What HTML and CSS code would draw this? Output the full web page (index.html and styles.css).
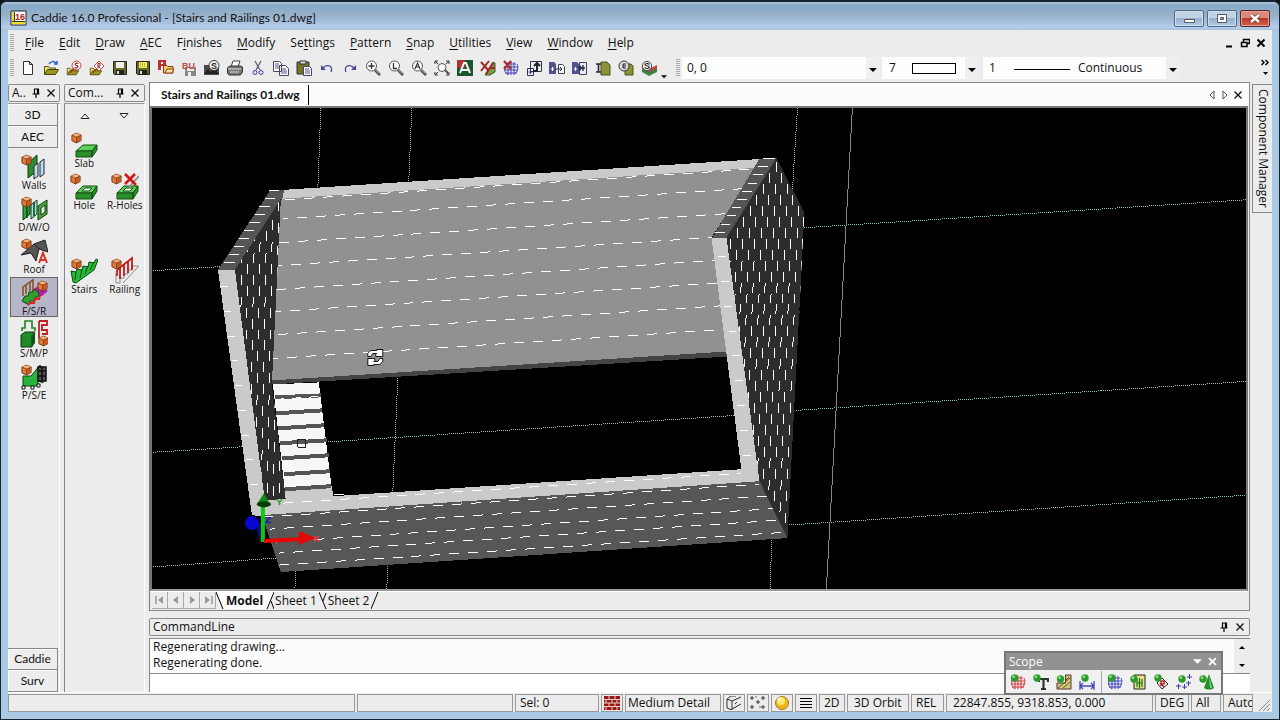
FILE: index.html
```html
<!DOCTYPE html>
<html lang="en">
<head>
<meta charset="utf-8">
<title>Caddie 16.0 Professional</title>
<link rel="stylesheet" href="styles.css">
</head>
<body>
<svg class="defs" aria-hidden="true">
  <symbol id="cube" viewBox="0 0 12 12"><path d="M1 3 6 .6l5 2.2v6L6 11.4 1 9z" fill="#e47a36" stroke="#713311"/><path d="M1 3l5 2 5-2.2L6 .8z" fill="#f7b27c"/><path d="M6 5v6l4.500-2.200V3.200z" fill="#c65d22"/><path d="M1 3l5 2 5-2M6 5v6" fill="none" stroke="#713311" stroke-width=".8"/></symbol>
  <symbol id="pin" viewBox="0 0 10 10"><path d="M3 1h5M3.500 1v5M6.500 1v5M7.500 1v5M1.500 6h7M5 6v4" fill="none" stroke="#000" stroke-width="1.200"/></symbol>
  <symbol id="x" viewBox="0 0 10 10"><path d="M1.500 1.500l7 7m0-7l-7 7" fill="none" stroke="currentColor" stroke-width="1.300"/></symbol>
  <symbol id="floppy" viewBox="0 0 16 16"><path d="M1.500 1.500h13v13h-12l-1-1z" fill="#686820" stroke="#222"/><path d="M4 2h8v6H4z" fill="#eee"/><path d="M4 10h8v5H4z" fill="#222"/><path d="M5 11h2v3H5z" fill="#ddd"/></symbol>
  <symbol id="folder" viewBox="0 0 16 16"><path d="M1.500 14V6.500h4l1 1.500h6v2" fill="#eee36a" stroke="#55540a"/><path d="M1.500 14.500l3-5h11l-3 5z" fill="#9a9820" stroke="#45440a"/></symbol>
  <symbol id="lens" viewBox="0 0 16 16"><circle cx="6.500" cy="6" r="5" fill="#fff" stroke="#555"/><path d="M10 10l5 5" stroke="#444" stroke-width="2.600"/><path d="M10.500 10l4 4" stroke="#ddd" stroke-width=".8"/></symbol>
  <symbol id="ball" viewBox="0 0 8 8"><circle cx="4" cy="4" r="3.700" fill="#2c9a2c"/><circle cx="3" cy="2.700" r="1.400" fill="#8fe08a"/></symbol>
  <symbol id="globe" viewBox="0 0 16 16"><path d="M8 1v14M11 2v13M5 2v13M1 7h14M1 10h14M2 13h12M3 4h10M14 4c2 4 0 8-2 10M2 6c-1 4 0 7 3 9" fill="none" stroke="currentColor"/></symbol>
  <symbol id="down" viewBox="0 0 8 8"><path d="M0 3h8L4 7z" fill="#000"/></symbol>
</svg>
<div class="window">
  <header class="titlebar">
    <svg class="appicon" viewBox="0 0 17 16"><path d="M1 1h15v14H1z" fill="#fff" stroke="#222"/><path d="M2 2h2v12H2zM2 12h13v2H2z" fill="#f2df28"/><path d="M4.500 2v10M2 11.500h13" stroke="#333"/><text x="5" y="10" font-size="9" font-weight="bold" fill="#c01818" class="sans">16</text></svg>
    <h1>Caddie 16.0 Professional - [Stairs and Railings 01.dwg]</h1>
    <div class="winbtns">
      <button aria-label="Minimize"><svg viewBox="0 0 28 15"><path d="M9.500 8.500h10v3h-10z" fill="#fff" stroke="#555b66"/></svg></button>
      <button aria-label="Restore"><svg viewBox="0 0 28 15"><path d="M9.500 3.500h9v8h-9z" fill="#fff" stroke="#555b66"/><path d="M12.500 6.500h3v2h-3z" fill="#8ab" stroke="#555b66"/></svg></button>
      <button class="close" aria-label="Close"><svg viewBox="0 0 28 15"><path d="M10 4l8 7m0-7l-8 7" stroke="#6b3530" stroke-width="4"/><path d="M10 4l8 7m0-7l-8 7" stroke="#fff" stroke-width="2.500"/></svg></button>
    </div>
  </header>
  <div class="client">
    <nav class="menu">
      <i class="grip"></i>
      <button><u>F</u>ile</button><button><u>E</u>dit</button><button><u>D</u>raw</button><button><u>A</u>EC</button><button>F<u>i</u>nishes</button><button><u>M</u>odify</button><button>Se<u>t</u>tings</button><button><u>P</u>attern</button><button><u>S</u>nap</button><button><u>U</u>tilities</button><button><u>V</u>iew</button><button><u>W</u>indow</button><button><u>H</u>elp</button>
      <span class="mdi">
        <button aria-label="Minimize drawing"><svg viewBox="0 0 10 10"><path d="M2 8.500h6" stroke="#000" stroke-width="2"/></svg></button>
        <button aria-label="Restore drawing"><svg viewBox="0 0 10 10"><path d="M3.500 4V1.500h6v4H7M3 1.500h7M1.500 4.500H7v4H1.500zM1 4.500h6" fill="none" stroke="#000" stroke-width="1.500"/></svg></button>
        <button aria-label="Close drawing"><svg viewBox="0 0 10 10"><path d="M1.500 1.500l7 7m0-7l-7 7" stroke="#000" stroke-width="2"/></svg></button>
      </span>
    </nav>
    <div class="toolbar">
      <i class="grip"></i>
      <div class="tools">
        <button aria-label="New"><svg viewBox="0 0 16 16"><path d="M3.500 1.500h6l3 3v10h-9z" fill="#fff" stroke="#333"/><path d="M9.500 1.500v3h3" fill="none" stroke="#333"/></svg></button>
        <button aria-label="Open"><svg viewBox="0 0 16 16"><use href="#folder"/><path d="M6 4c2-3 5-3 7-1m1-2v3h-3" fill="none" stroke="#2d5ec4" stroke-width="1.500"/></svg></button>
        <button aria-label="Open S"><svg viewBox="0 0 16 16"><use href="#folder" y="3" width="13" height="13"/><circle cx="10.500" cy="5.500" r="4.500" fill="#fff" stroke="#b44"/><path d="M12.500 3.500C9 2 8 5 10.500 5.500S12 9 8.500 7.500M8 8l-4 5" fill="none" stroke="#a22" stroke-width="1.200"/></svg></button>
        <button aria-label="Open R"><svg viewBox="0 0 16 16"><use href="#folder" y="3" width="13" height="13"/><path d="M10 1l5 5-5 5-5-5z" fill="#fff" stroke="#b55"/><path d="M9 8.500v-5h2v2.500H9l2.500 2.500M7 9l-3 4" fill="none" stroke="#a22"/></svg></button>
        <button aria-label="Save"><svg viewBox="0 0 16 16"><use href="#floppy"/></svg></button>
        <button aria-label="Save as"><svg viewBox="0 0 16 16"><use href="#floppy"/><path d="M4 2h8v6H4z" fill="#f4ef55"/><path d="M5 4h6M5 6h6" stroke="#775" stroke-dasharray="1 1"/></svg></button>
        <button aria-label="Archive"><svg viewBox="0 0 16 16"><path d="M0 0h8v10H0z" fill="#c22f2f"/><path d="M3 2h2v2H3zM3 6h2v4H3z" fill="#fff"/><path d="M5.500 13V5.500H9l1 1h5V13z" fill="#f6ca6a" stroke="#8a3d14"/><path d="M7 13l2-4h7l-2 4z" fill="#ffe59a" stroke="#8a3d14"/></svg></button>
        <button aria-label="Backup"><svg viewBox="0 0 16 16"><path d="M4 7h11v9H4z" fill="#888"/><path d="M6 8h7v3H6zM7 12h3v4H7z" fill="#eee"/><text x="1" y="9" font-size="9" font-weight="bold" fill="#c44b4b" class="sans">BU</text></svg></button>
        <button aria-label="Snapshot"><svg viewBox="0 0 16 16"><path d="M0 5h15v10H0z" fill="#4a4a4a"/><path d="M0 14l4-5 3 3 3-4 5 6z" fill="#222"/><circle cx="10" cy="5.500" r="5" fill="#f5f5f5" stroke="#333"/><text x="7" y="9" font-size="9" font-weight="bold" fill="#222" class="sans">S</text></svg></button>
        <button aria-label="Print"><svg viewBox="0 0 16 16"><path d="M4 7l2-6h7l-2 6z" fill="#fff" stroke="#444"/><path d="M.500 8l2-2h11l2 1v5l-2 3H2l-1.500-2z" fill="#777" stroke="#333"/><path d="M1 9h13M3 12h9" stroke="#ddd"/></svg></button>
        <button aria-label="Cut"><svg viewBox="0 0 16 16"><path d="M5 1l5 9M11 1L6 10" stroke="#557" fill="none" stroke-width="1.200"/><circle cx="5" cy="12.500" r="2" fill="none" stroke="#3b3ba0"/><circle cx="11" cy="12.500" r="2" fill="none" stroke="#3b3ba0"/></svg></button>
        <button aria-label="Copy"><svg viewBox="0 0 16 16"><path d="M.500 1.500h6l2 2v8h-8zM6.500 5.500h6l3 3v7h-9z" fill="#fff" stroke="#446"/><path d="M2 4h4M2 6h4M2 8h4M8 9h5M8 11h6M8 13h6" stroke="#558"/></svg></button>
        <button aria-label="Paste"><svg viewBox="0 0 16 16"><path d="M1 2h12v12H1z" fill="#747428" stroke="#333"/><path d="M4 1h6v3H4z" fill="#ddd" stroke="#333"/><path d="M7.500 6.500h6l2 2v7h-8z" fill="#fff" stroke="#446"/><path d="M9 9h4M9 11h5M9 13h5" stroke="#558"/></svg></button>
        <button aria-label="Undo"><svg viewBox="0 0 16 16"><path d="M4 8c3-4 11-3 8 4" fill="none" stroke="#46469c" stroke-width="1.300"/><path d="M2 5v5h5z" fill="#46469c"/></svg></button>
        <button aria-label="Redo"><svg viewBox="0 0 16 16"><path d="M12 8C9 4 1 5 4 12" fill="none" stroke="#46469c" stroke-width="1.300"/><path d="M14 5v5H9z" fill="#46469c"/></svg></button>
        <button aria-label="Zoom in"><svg viewBox="0 0 16 16"><use href="#lens"/><path d="M3.500 6h6M6.500 3v6" stroke="#333" stroke-width="1.300"/></svg></button>
        <button aria-label="Zoom last"><svg viewBox="0 0 16 16"><use href="#lens"/><path d="M5.500 3v5.500H9" fill="none" stroke="#333" stroke-width="1.300"/></svg></button>
        <button aria-label="Zoom all"><svg viewBox="0 0 16 16"><use href="#lens"/><path d="M4 9l2.500-6L9 9M5 7h3" fill="none" stroke="#333" stroke-width="1.200"/></svg></button>
        <button aria-label="Zoom extents"><svg viewBox="0 0 16 16"><path d="M1 4V1h3M12 1h3v3M15 12v3h-3M4 15H1v-3M1 1l3 3M15 1l-3 3M1 15l3-3M12 12l3 3" fill="none" stroke="#333"/><circle cx="8" cy="7.500" r="4" fill="#fff" stroke="#555"/><path d="M11 10l3 3" stroke="#555" stroke-width="2"/></svg></button>
        <button aria-label="Attributes"><svg viewBox="0 0 16 16"><path d="M0 0h16v16H0z" fill="#18572a"/><path d="M0 0h8v8H0z" fill="#b13232"/><path d="M3 13l4-10h2l4 10M5 10h6" fill="none" stroke="#fff" stroke-width="2"/></svg></button>
        <button aria-label="Toggle hatch"><svg viewBox="0 0 16 16"><path d="M5 15L13 2l2 1v9l-5 3z" fill="#7a9b45" stroke="#3d5a22"/><path d="M1 2l8 9M9 1L1 11M13 3l-7 11M9 8h6" stroke="#a12626" stroke-width="2"/></svg></button>
        <button aria-label="Toggle grid"><svg viewBox="0 0 16 16"><g color="#4545b8"><use href="#globe"/></g><path d="M1 1l7 8M8 1L1 9" stroke="#b02828" stroke-width="2.200"/></svg></button>
        <button aria-label="Insert reference"><svg viewBox="0 0 16 16"><path d="M4.500 1.500h11v10h-11zM1.500 8.500h6v7h-6z" fill="#e9edf8" stroke="#334"/><path d="M2.500 12h4M4.500 10v4" stroke="#338"/><path d="M7 11h4V4M8 6l3-3 3 3" fill="none" stroke="#222" stroke-width="2"/></svg></button>
        <button aria-label="Copy pages"><svg viewBox="0 0 16 16"><path d="M0 2h5l2 2v10H0z" fill="#51518f"/><path d="M9.500 4.500h4l2 2v7h-6z" fill="#f6f6ff" stroke="#445"/><path d="M2 9h3M3.500 7v4" stroke="#fff"/><path d="M6 9h7M11 7l2 2-2 2" fill="none" stroke="#333"/></svg></button>
        <button aria-label="Merge pages"><svg viewBox="0 0 16 16"><path d="M0 2h5l2 2v10H0z" fill="#51518f"/><path d="M7.500 2.500h7v12h-7z" fill="#e8e8ff" stroke="#445"/><path d="M2 9h3M3.500 7v4" stroke="#fff"/><path d="M7 8h6M11 5v6M9 6L7 8l2 2" fill="none" stroke="#223" stroke-width="1.300"/></svg></button>
        <button aria-label="Info"><svg viewBox="0 0 16 16"><path d="M6 2h6l3 3v10H6z" fill="#8c9238" stroke="#4c5014"/><path d="M1 4h5M3.500 4v8M1 12h5" stroke="#224" stroke-width="1.600"/></svg></button>
        <button aria-label="Clipboard text"><svg viewBox="0 0 16 16"><path d="M7 4h6l2 2v9H7z" fill="#8c9238" stroke="#4c5014"/><circle cx="6" cy="6" r="5" fill="#ddd" stroke="#333"/><path d="M8 4H5v4h3M5 6h3" fill="none" stroke="#222"/></svg></button>
        <button aria-label="Layers"><svg viewBox="0 0 16 16"><path d="M1 8l7 3 8-4v5l-8 4-7-4z" fill="#3c8244"/><path d="M1 6l7 3 8-4v3l-8 4-7-4z" fill="#c6403e"/><circle cx="6" cy="6" r="4.600" fill="#f4f4f4" stroke="#444"/><text x="3" y="9" font-size="9" font-weight="bold" fill="#222" class="sans">S</text></svg></button>
        <button class="more" aria-label="More tools"><svg viewBox="0 0 8 8"><use href="#down"/></svg></button>
      </div>
      <i class="grip"></i>
      <label class="combo coord"><select aria-label="Coordinates"><option>0, 0</option></select><svg viewBox="0 0 8 8"><use href="#down"/></svg></label>
      <label class="combo colour"><select aria-label="Colour"><option>7</option></select><i class="swatch"></i><svg viewBox="0 0 8 8"><use href="#down"/></svg></label>
      <label class="combo linetype"><span>1</span><i class="stroke"></i><select aria-label="Line type"><option>Continuous</option></select><svg viewBox="0 0 8 8"><use href="#down"/></svg></label>
      <button class="chev" aria-label="Toolbar options"><svg viewBox="0 0 10 20"><path d="M1.500 2l2.500 2.500L1.500 7M5.500 2L8 4.500 5.500 7" fill="none" stroke="#000" stroke-width="1.400"/><path d="M3 14h5l-2.500 3z"/></svg></button>
    </div>
    <div class="work">
      <aside class="dock aec">
        <div class="dockhead"><span>A..</span><svg viewBox="0 0 10 10"><use href="#pin"/></svg><svg viewBox="0 0 10 10"><use href="#x"/></svg></div>
        <div class="dockbody">
          <button class="cat">3D</button><button class="cat">AEC</button>
          <button class="tool"><svg viewBox="0 0 28 28"><path d="M8 11l9-8v16l-9 7z" fill="#2e8b2e" stroke="#0c3c0c"/><path d="M14 14l4-3v13l-4 3zM20 10l4-3v15l-4 3z" fill="#b8e0f4" stroke="#223"/><use href="#cube" x="1" y="2" width="11" height="12"/></svg>Walls</button>
          <button class="tool"><svg viewBox="0 0 28 28"><path d="M3 12l7-5v13l-7 6z" fill="#2fa04b" stroke="#0c3c0c"/><path d="M11 11l6-5v14l-6 5z" fill="#9fe6dd" stroke="#0c3c0c"/><path d="M18 12l9-6v14l-9 6z" fill="#4da53e" stroke="#0c3c0c"/><path d="M21 14l4-3v7l-4 3z" fill="#eee" stroke="#0c3c0c"/><path d="M7 9v15M14 8v14" stroke="#0c3c0c" stroke-width="1.500"/><use href="#cube" x="1" y="2" width="11" height="12"/></svg>D/W/O</button>
          <button class="tool"><svg viewBox="0 0 28 28"><path d="M1 19L14 8l11-4 3 12-9-3-3 12-5-8z" fill="#555" stroke="#222"/><path d="M14 8l5 5" stroke="#222"/><path d="M19 27l4-10 4 10M20 24h6" fill="none" stroke="#d3331f" stroke-width="2"/><use href="#cube" x="1" y="2" width="11" height="12"/></svg>Roof</button>
          <button class="tool on"><svg viewBox="0 0 28 28"><path d="M12 12l8-5 8 6-6 5h-8z" fill="#b01fb0"/><path d="M2 23l3-5h3l1-4h4l1-3 5 4-1 4h-3l-1 4h-4l-1 4z" fill="#2fa02f" stroke="#0c4c0c"/><path d="M8 27l2-2h4l1-4h4l1-4" fill="none" stroke="#d22" stroke-width="2"/><path d="M3 18V9l10-7v11M3 9v9M6 7v9M10 4v9" fill="none" stroke="#835018" stroke-width="1.500"/><use href="#cube" x="17" y="2" width="11" height="12"/></svg>F/S/R</button>
          <button class="tool"><svg viewBox="0 0 28 28"><path d="M2 11V8h3V1h7v7h3v3" fill="none" stroke="#228022" stroke-width="1.600"/><path d="M1 15l4-3h10l-3 4v11H1z" fill="#1f8a28" stroke="#0a3a0a"/><path d="M12 16l3-4v11l-3 4z" fill="#0e5815"/><path d="M19 1v17M19 1h8v4h-5v5h5v4h-5" fill="none" stroke="#c02020" stroke-width="1.800"/><use href="#cube" x="18" y="15" width="11" height="12"/></svg>S/M/P</button>
          <button class="tool"><svg viewBox="0 0 28 28"><path d="M3 14h8l9-11 3 3v15l-5-2v5H3z" fill="#28b43c" stroke="#0c4c0c"/><path d="M18 5h8v14h-8zM19 9h7M22 5v14M18 14h8" fill="#555" stroke="#111" stroke-width="1.500"/><path d="M2 24h3v3H2zM11 24h3v3h-3zM17 22h3v3h-3z" fill="#fff" stroke="#111"/><use href="#cube" x="1" y="2" width="11" height="12"/></svg>P/S/E</button>
          <span class="spring"></span>
          <button class="cat">Caddie</button><button class="cat">Surv</button>
        </div>
      </aside>
      <aside class="dock com">
        <div class="dockhead"><span>Com...</span><svg viewBox="0 0 10 10"><use href="#pin"/></svg><svg viewBox="0 0 10 10"><use href="#x"/></svg></div>
        <div class="dockbody">
          <div class="scrollers"><button aria-label="Scroll up"><svg viewBox="0 0 10 8"><path d="M1 6.500h8L5 2z" fill="#fff" stroke="#222"/></svg></button><button aria-label="Scroll down"><svg viewBox="0 0 10 8"><path d="M1 1.500h8L5 6z" fill="#fff" stroke="#222"/></svg></button></div>
          <div class="parts">
            <button class="tool"><svg viewBox="0 0 28 28"><path d="M6 21l7-6h14l-5 6z" fill="#58d358" stroke="#124c12"/><path d="M6 21h16v6H6zM22 21l5-6v5l-5 7z" fill="#2a8f2a" stroke="#124c12"/><use href="#cube" x="1" y="2" width="11" height="12"/></svg>Slab</button><span></span>
            <button class="tool"><svg viewBox="0 0 28 28"><path d="M6 21l7-7h14l-5 7z" fill="#58d358" stroke="#124c12"/><path d="M12 19l3-3h7l-3 3z" fill="#fff" stroke="#124c12"/><path d="M6 21h16v6H6zM22 21l5-7v5l-5 8z" fill="#2a8f2a" stroke="#124c12"/><use href="#cube" x="0" y="1" width="11" height="12"/></svg>Hole</button>
            <button class="tool"><svg viewBox="0 0 28 28"><path d="M6 21l7-7h14l-5 7z" fill="#58d358" stroke="#124c12"/><path d="M12 19l3-3h7l-3 3z" fill="#fff" stroke="#124c12"/><path d="M6 21h16v6H6zM22 21l5-7v5l-5 8z" fill="#2a8f2a" stroke="#124c12"/><path d="M18 15L28 4" stroke="#999" stroke-width="2"/><path d="M14 2l11 11M24 2L14 12" stroke="#d11616" stroke-width="2.600"/><use href="#cube" x="0" y="1" width="11" height="12"/></svg>R-Holes</button>
            <span></span><span></span>
            <button class="tool"><svg viewBox="0 0 28 28"><path d="M1 15l5 1 1-3 5 1 1-4 5 1 1-5 5 1 2-4 2 1-4 10L6 27l-3-1z" fill="#27b93a" stroke="#0b490f"/><path d="M6 16l-1 8M12 14l-2 8M18 10l-3 8M24 6l-4 8" stroke="#0b490f"/><use href="#cube" x="1" y="2" width="11" height="12"/></svg>Stairs</button>
            <button class="tool"><svg viewBox="0 0 28 28"><path d="M5 17v10h4v-5h4v-4h4v-4h4v-4h6M12 27L28 10" fill="none" stroke="#888"/><path d="M6 14L21 2v12M17 5v12M13 9v11M9 12v11M6 14v6" fill="none" stroke="#c81818" stroke-width="1.800"/><use href="#cube" x="0" y="2" width="11" height="12"/></svg>Railing</button>
          </div>
        </div>
      </aside>
      <main class="centre">
        <section class="doc">
          <div class="doctabs"><button class="doctab">Stairs and Railings 01.dwg</button>
            <span class="docnav"><button aria-label="Previous tab"><svg viewBox="0 0 10 10"><path d="M7 1v8L3 5z" fill="#fff" stroke="#555"/></svg></button><button aria-label="Next tab"><svg viewBox="0 0 10 10"><path d="M3 1v8l4-4z" fill="#fff" stroke="#555"/></svg></button><button aria-label="Close tab"><svg viewBox="0 0 10 10"><use href="#x"/></svg></button></span></div>
          <div class="canvas">
            <svg viewBox="152 107 1095 482" preserveAspectRatio="none" shape-rendering="crispEdges" role="img" aria-label="3D model of walls, slab and stairs">
              <defs>
                <clipPath id="rightClip"><path d="M777 157L805 212L788 538L760 481L727 237z"/></clipPath>
                <clipPath id="leftClip"><path d="M235 269L281 198L272 384L286 498L265 501z"/></clipPath>
                <clipPath id="floorClip"><path d="M281 198L756 167L712 237L728 352L272 380z"/></clipPath>
                <clipPath id="frontClip"><path d="M262 515L760 481L788 538L281 572z"/></clipPath>
              </defs>
              <g class="gridlines"><path d="M153 270L220 266M805 227L1247 199M153 452L250 446M322 442L737 415M797 410L1247 381M153 567L276 558M788 525L1247 495"/><path d="M321 107L318 187M412 107L409 181M398 378L393 492M388 566L387 589M296 571L295 589M798 107L793 190M772 540L771 589"/></g>
              <path d="M853 107L827 589" stroke="#858585"/>
              <path d="M284 189L762 158L756 168L281 199z" fill="#cacaca"/>
              <path d="M281 198L756 167L712 237L728 352L272 380z" fill="#919191"/>
              <path d="M272 380L728 351L729 356L272 384z" fill="#444"/>
              <g class="dashes" clip-path="url(#floorClip)"><path d="M285 199L756 168"/><path d="M283 218L756 187"/><path d="M279 242L740 212"/><path d="M277 265L740 235"/><path d="M276 289L740 258"/><path d="M276 311L740 281"/><path d="M278 334L740 304"/><path d="M273 358L740 328"/></g>
              <path d="M218 269L270 190L284 189L283 197L235 270z" fill="#555"/>
              <path d="M235 269L281 198L272 384L286 498L265 501z" fill="#2d2d2d"/>
              <path class="courses" clip-path="url(#leftClip)" d="M243 208L237 510M249 197L243 510M255 208L249 510M261 197L255 510M267 208L261 510M273 197L267 510M279 200L273 510M285 197L279 510M291 208L285 510"/>
              <path d="M218 269L235 269L265 501L265 515L252 515z" fill="#cacaca"/>
              <path d="M269 190h10M265 198h10M259 206h11M255 214h10M249 222h11M244 230h10M239 238h10M234 246h10M229 254h10M224 262h11M220 286h8M224 311h7M228 336h7M232 360h6M235 385h7M239 410h7M242 435h7M246 459h7M250 484h8" stroke="#fff"/>
              <path d="M273 384L319 382L333 497L286 500z" fill="#f7f7f7"/>
              <path d="M285 490L332 487L334 499L286 502z" fill="#cacaca"/>
              <path d="M275 397L321 395M276 413L322 410M278 428L324 425M280 443L327 440M282 458L329 455M284 474L330 471M285 489L331 486" stroke="#555" stroke-width="4"/>
              <path d="M275 399L321 396" stroke="#fff" stroke-dasharray="9 8"/>
              <path d="M298 439h8v8h-8z" fill="none" stroke="#222"/>
              <path d="M252 515L265 500L334 496L742 469L760 481L262 516z" fill="#cacaca"/>
              <path d="M262 515L760 481L788 538L281 572z" fill="#575757"/>
              <g class="dashes" clip-path="url(#frontClip)"><path d="M263 517L760 484"/><path d="M270 529L780 495"/><path d="M276 542L780 508"/><path d="M279 553L780 520"/><path d="M279 565L788 532"/></g>
              <path class="dash" d="M283 503L742 473M334 494h12"/>
              <path d="M760 158L777 157L727 238L712 238z" fill="#555"/>
              <path d="M712 237L727 237L760 481L742 470z" fill="#cacaca"/>
              <path d="M777 157L805 212L788 538L760 481L727 237z" fill="#2d2d2d"/>
              <path class="courses" clip-path="url(#rightClip)" d="M735 150L719 550M741 161L725 550M747 150L731 550M753 161L737 550M759 150L743 550M765 161L749 550M771 150L755 550M777 161L761 550M783 150L767 550M789 161L773 550M795 150L779 550M801 161L785 550M807 150L791 550M813 161L797 550"/>
              <path d="M764 158h12M759 166h10M754 174h10M749 183h9M743 191h10M738 199h10M733 207h9M728 215h9M722 224h9M716 232h10M719 256h8M722 281h8M725 306h8M730 331h7M733 355h8M736 380h8M738 405h8M741 430h8M744 455h8" stroke="#fff"/>
              <g shape-rendering="auto"><path d="M263 541l-5-17" stroke="#081269" stroke-width="6"/><circle cx="252" cy="523" r="7" fill="#0808d0"/><path d="M263 542V503" stroke="#08ca12" stroke-width="4"/><path d="M257 504l7-11 6 11z" fill="#108e18"/><ellipse cx="264" cy="504" rx="7" ry="3" fill="#063d08"/><path d="M264 541l40-2" stroke="#f00000" stroke-width="4"/><path d="M299 531l17 7-17 7z" fill="#e00808"/><text x="313" y="542" class="axis" fill="#f33">X</text><text x="276" y="505" class="axis" fill="#18a025">Y</text><text x="265" y="523" class="axis" fill="#1818c8">Z</text></g>
              <g shape-rendering="auto" fill="#fff" stroke="#111"><path d="M368 356v-3l3-3h6v-1h6v7h-7v-2l1-1h-4l-2 3z"/><path d="M383 358v3l-3 3h-6v1h-6v-7h7v2l-1 1h4l2-3z"/></g>
            </svg>
          </div>
          <div class="sheets">
            <span class="pager"><button aria-label="First"><svg viewBox="0 0 12 10"><path d="M2 1v8" stroke="#999" stroke-width="1.500"/><path d="M9 1v8L4 5z" fill="#999"/></svg></button><button aria-label="Previous"><svg viewBox="0 0 12 10"><path d="M8 1v8L3 5z" fill="#999"/></svg></button><button aria-label="Next"><svg viewBox="0 0 12 10"><path d="M4 1v8l5-4z" fill="#999"/></svg></button><button aria-label="Last"><svg viewBox="0 0 12 10"><path d="M10 1v8" stroke="#999" stroke-width="1.500"/><path d="M3 1v8l5-4z" fill="#999"/></svg></button></span>
            <svg class="slant" viewBox="0 0 8 17"><path d="M0 0h8v17z" fill="#fff"/><path d="M0 0l7 17" stroke="#000"/></svg><button class="sheet on">Model</button><svg class="slant" viewBox="0 0 8 17"><path d="M0 0h8L1 17H0z" fill="#fff"/><path d="M8 0L1 17M5 9l3 8" fill="none" stroke="#000"/></svg><button class="sheet">Sheet 1</button><svg class="slant" viewBox="0 0 8 17"><path d="M0 0l7 17M7 1L4 9" fill="none" stroke="#000"/></svg><button class="sheet">Sheet 2</button><svg class="slant" viewBox="0 0 8 17"><path d="M7 0L0 17" stroke="#000"/></svg>
          </div>
        </section>
        <section class="command">
          <div class="dockhead"><span>CommandLine</span><svg viewBox="0 0 10 10"><use href="#pin"/></svg><svg viewBox="0 0 10 10"><use href="#x"/></svg></div>
          <div class="log"><div><p>Regenerating drawing...</p><p>Regenerating done.</p></div><span class="scroll"><button aria-label="Scroll log up"><svg viewBox="0 0 8 8"><path d="M1 5h6L4 2z"/></svg></button><button aria-label="Scroll log down"><svg viewBox="0 0 8 8"><path d="M1 3h6L4 6z"/></svg></button></span></div>
          <input class="cmdinput" aria-label="Command">
        </section>
      </main>
      <aside class="right"><button class="vtab">Component Manager</button></aside>
    </div>
    <footer class="status">
      <span class="cell grow"></span><span class="cell c156"></span><span class="cell c84">Sel: 0</span>
      <button class="cell sq" aria-label="Bricks"><svg viewBox="0 0 16 14"><path d="M0 0h16v14H0z" fill="#9a1717"/><path d="M0 3.500h16M0 7h16M0 10.500h16M5 0v3M11 0v3M2 4v3M8 4v3M13 4v3M5 7v3M11 7v3M2 11v3M8 11v3M13 11v3" stroke="#f0d0c8"/></svg></button>
      <button class="cell c96">Medium Detail</button>
      <button class="cell sq" aria-label="Isometric"><svg viewBox="0 0 16 14"><path d="M1 3l5 2 9-4M6 5v9M1 3v9l5 2M1 3l4-3h5M6 13l9-5M9 8l2-2" fill="none" stroke="#333"/></svg></button>
      <button class="cell sq" aria-label="Snap"><svg viewBox="0 0 16 14"><path d="M1 1h2v2H1zM12 1h2v2h-2zM1 10h2v2H1zM12 10h2v2h-2zM7 5h2v2H7z" fill="#fff" stroke="#333"/><path d="M5 1h2M9 11h2" stroke="#666"/></svg></button>
      <button class="cell sq" aria-label="Light"><svg viewBox="0 0 16 14"><circle cx="8" cy="7" r="6.500" fill="#f0b51a" stroke="#a87a18"/><circle cx="7" cy="5" r="4" fill="#ffe871"/><circle cx="5" cy="3.500" r="1.500" fill="#fff"/></svg></button>
      <button class="cell sq" aria-label="Line weight"><svg viewBox="0 0 16 14"><path d="M2 2.500h12M2 5.500h12M2 8.500h12M2 11.500h12" stroke="#000" shape-rendering="crispEdges"/></svg></button>
      <button class="cell c26">2D</button><button class="cell c62">3D Orbit</button><button class="cell c33">REL</button><span class="cell c207">22847.855, 9318.853, 0.000</span><button class="cell c34">DEG</button><button class="cell c30">All</button><button class="cell c30">Auto</button>
      <svg class="sizer" viewBox="0 0 12 12"><path d="M1 12L12 1M5 12l7-7M9 12l3-3" stroke="#888"/></svg>
    </footer>
  </div>
  <section class="scope" aria-label="Scope">
    <div class="scopehead"><span>Scope</span><svg viewBox="0 0 8 8"><path d="M0 2h8L4 6z" fill="#fff"/></svg><svg viewBox="0 0 8 8"><path d="M1 1l6 6m0-6L1 7" stroke="#fff" stroke-width="1.800"/></svg></div>
    <div class="scopetools">
      <button aria-label="Grid scope"><svg viewBox="0 0 16 16"><g color="#d03c3c"><use href="#globe"/></g><use href="#ball" width="9" height="8"/></svg></button>
      <button aria-label="Text scope"><svg viewBox="0 0 16 16"><path d="M6 5h9v3M6 5v3M10.500 5v10M8 15h5" fill="none" stroke="#333" stroke-width="2.200"/><use href="#ball" width="8" height="8"/></svg></button>
      <button aria-label="Hatch scope"><svg viewBox="0 0 16 16"><path d="M9.500 1v8H1v6h14V1z" fill="#cfc77a" stroke="#533"/><path d="M2 14l12-10M7 14l7-6M10 6l3-3" stroke="#665c20"/><use href="#ball" y="1" width="9" height="8"/></svg></button>
      <button aria-label="Dimension scope"><svg viewBox="0 0 16 16"><path d="M1 7v9M15 7v9M1 12h14M4 9l-3 3 3 3M12 9l3 3-3 3" fill="none" stroke="#4747c0" stroke-width="1.300"/><use href="#ball" x="2" width="8" height="8"/></svg></button>
      <i></i>
      <button aria-label="View scope"><svg viewBox="0 0 16 16"><g color="#4343c0"><use href="#globe"/></g><use href="#ball" width="9" height="8"/></svg></button>
      <button aria-label="Group scope"><svg viewBox="0 0 16 16"><path d="M4 1h11v14H4z" fill="#e8e38a" stroke="#222"/><path d="M7 5v8M12 5v8M7 9h5M9.500 4v10" stroke="#187018" stroke-width="1.200"/><use href="#ball" y="1" width="8" height="8"/></svg></button>
      <button aria-label="Reference scope"><svg viewBox="0 0 16 16"><path d="M9 4l6 6-6 5-5-6z" fill="#fff" stroke="#422"/><path d="M8 12V7h3v3H8l3 3" fill="none" stroke="#b42020" stroke-width="1.500"/><use href="#ball" x="1" width="8" height="8"/></svg></button>
      <button aria-label="Point scope"><svg viewBox="0 0 16 16"><path d="M11 3h5M13.500 0v5M10 9h5M12.500 7v5M0 12h5M2.500 10v5M6 13h5M8.500 10v5" stroke="#3c3cae"/><use href="#ball" x="2" y="1" width="8" height="8"/></svg></button>
      <button aria-label="Component scope"><svg viewBox="0 0 16 16"><path d="M10 0l5 14c-3 2-7 2-10 0z" fill="#238c2b"/><path d="M10 1l1 13h2z" fill="#7ed07c"/><use href="#ball" x="0" y="1" width="8" height="8"/></svg></button>
    </div>
  </section>
</div>
</body>
</html>
```
FILE: styles.css
```css
* { box-sizing: border-box; }
body { margin: 0; background: #111; font: 12px/16px "Open Sans", "Noto Sans", sans-serif; color: #111; }
button, input, select { font: inherit; color: inherit; margin: 0; padding: 0; border: 0; background: none; border-radius: 0; }
svg { display: block; flex: none; }
p { margin: 0; }
.defs { position: absolute; width: 0; height: 0; }
.sans { font-family: "Liberation Sans", sans-serif; }

.window { position: relative; height: 100vh; min-height: 560px; display: flex; flex-direction: column; padding: 0 7px 7px; background: #abc8e2; border: solid #152534; border-width: 2px 1px 1px; border-radius: 7px 7px 0 0; }
.titlebar { height: 28px; flex: none; display: flex; align-items: center; margin: 0 -7px; padding: 4px 9px 0; background: linear-gradient(#b5c6d8, #86a9c9 12%, #98b2c8 48%, #a2bbda 65%, #b6cde9 90%, #a6c4de); border-radius: 6px 6px 0 0; }
.appicon { width: 17px; height: 16px; }
.titlebar h1 { flex: 1; margin: 0 0 0 4px; font: 400 12px/18px Lato, "Open Sans", sans-serif; }
.winbtns { display: flex; gap: 3px; }
.winbtns button { width: 30px; height: 17px; border: 1px solid #526a85; border-radius: 2px; box-shadow: inset 0 0 0 1px #cfdfef; background: linear-gradient(#c1d2e4 45%, #94b0cc 50%, #b3cbe4); }
.winbtns .close { border-color: #5a2420; box-shadow: inset 0 0 0 1px #e3a297; background: linear-gradient(#d88b7c 45%, #b83b29 50%, #cd6347); }
.winbtns svg { width: 28px; height: 15px; }

.client { flex: 1; min-height: 0; display: flex; flex-direction: column; background: #ececec; }
.menu { height: 26px; flex: none; display: flex; align-items: center; padding: 0 6px 0 2px; }
.menu > button { padding: 0 8px 0 7px; }
.menu u { text-underline-offset: 2px; }
.grip { width: 4px; height: 18px; flex: none; background: repeating-linear-gradient(#aaa 0 1px, transparent 1px 2px); }
.menu .grip { margin-right: 4px; }
.mdi { margin-left: auto; display: flex; gap: 6px; }
.mdi svg { width: 10px; height: 10px; }

.toolbar { height: 26px; flex: none; display: flex; align-items: center; padding: 0 2px 2px; }
.tools { display: flex; align-items: center; margin: 0 8px 0 2px; }
.tools button { width: 23px; height: 22px; display: flex; align-items: center; justify-content: center; }
.tools svg { width: 16px; height: 16px; }
.tools .more { width: 8px; align-items: flex-end; }
.tools .more svg { width: 6px; height: 6px; }
.combo { position: relative; height: 22px; display: flex; align-items: center; background: #fdfdfd; padding-right: 15px; margin-left: 2px; }
.combo select { appearance: none; flex: 1; min-width: 0; }
.combo svg { position: absolute; right: 0; top: 0; width: 14px; height: 22px; padding: 8px 3px 6px; background: #efefef; pointer-events: none; }
.coord { width: 198px; padding-left: 5px; }
.colour { width: 97px; padding-left: 7px; }
.colour select { padding-right: 56px; }
.swatch { position: absolute; left: 30px; top: 6px; width: 44px; height: 11px; border: 1px solid #000; background: #fff; pointer-events: none; }
.linetype { width: 197px; padding-left: 6px; margin-left: 4px; }
.stroke { width: 56px; height: 1px; margin: 2px 8px 0 18px; background: #000; }
.chev { margin-left: auto; }
.chev svg { width: 10px; height: 20px; }

.work { flex: 1; min-height: 0; display: flex; }
.dock { display: flex; flex-direction: column; gap: 1px; padding-top: 2px; flex: none; }
.dockhead { height: 18px; flex: none; display: flex; align-items: center; gap: 5px; padding: 0 4px 0 3px; border: 1px solid #8a8a8a; border-radius: 2px; background: #ececec; }
.dockhead span { flex: 1; white-space: nowrap; }
.dockhead svg { width: 10px; height: 10px; }
.dock.aec { width: 52px; margin-right: 4px; }
.dock.com { width: 81px; margin-right: 4px; }
.dockbody { flex: 1; min-height: 0; display: flex; flex-direction: column; border-top: 1px solid #999; }
.aec .dockbody { padding-right: 1px; border-right: 1px solid #fff; }
.com .dockbody { border-left: 1px solid #888; border-right: 1px solid #fff; }
.cat { height: 22px; flex: none; border: solid #888; border-width: 0 1px 1px 0; background: #ededed; box-shadow: inset 1px 1px #fafafa; font-family: Lato, "Open Sans", sans-serif; }
.spring { flex: 1; }
.tool { height: 40px; margin: 1px 0 1px 2px; flex: none; display: flex; flex-direction: column; align-items: center; font-family: "Open Sans", sans-serif; font-size: 10px; line-height: 10px; border: 1px solid transparent; white-space: nowrap; }
.tool svg { width: 28px; height: 28px; }
.cat + .tool { margin-top: 3px; }
.tool.on { background: #b6b6c8; border-color: #666; }
.spring + .cat { border-top-width: 1px; }
.scrollers { height: 23px; display: flex; justify-content: space-around; align-items: center; }
.scrollers svg { width: 10px; height: 8px; }
.parts { display: grid; grid-template-columns: 1fr 1fr; column-gap: 2px; grid-auto-rows: 42px; padding-top: 1px; }
.parts .tool { margin: 1px 0; }

.centre { flex: 1; min-width: 0; display: flex; flex-direction: column; }
.doc { flex: 1; min-height: 0; display: flex; flex-direction: column; border: 1px solid #888; border-left-color: #777; }
.doctabs { height: 23px; flex: none; display: flex; justify-content: space-between; align-items: center; background: #fcfcfc; }
.doctab { padding: 2px 8px 2px 11px; font: 700 12px/16px Lato, "Open Sans", sans-serif; border-right: 1px solid #000; background: #fff; }
.docnav { display: flex; gap: 3px; padding-right: 6px; }
.docnav svg { width: 10px; height: 10px; }
.canvas { flex: 1; min-height: 0; margin-right: 1px; border: 2px solid #777; border-bottom-color: #999; background: #000; }
.canvas svg { width: 100%; height: 100%; }
.gridlines { fill: none; stroke: #82c5ae; stroke-dasharray: 1 1; }
.dashes, .dash { fill: none; stroke: #fff; stroke-dasharray: 10 9; }
.dashes path:nth-child(even) { stroke-dashoffset: 5; }
.courses { fill: none; stroke: #fff; stroke-dasharray: 10 12; }
.axis { font: 700 10px "Liberation Sans", sans-serif; }
.sheets { height: 19px; flex: none; display: flex; align-items: flex-start; padding-left: 2px; border-top: 1px solid #fff; }
.pager { display: flex; }
.pager button { width: 16px; height: 17px; border-right: 1px solid #aaa; border-bottom: 1px solid #aaa; display: flex; align-items: center; justify-content: center; }
.pager svg { width: 12px; height: 10px; }
.slant { width: 8px; height: 17px; }
.sheet { height: 17px; padding: 0 2px 0 1px; }
.sheet.on { font-weight: 700; background: #fff; padding: 0 3px 0 2px; }
.command { flex: none; display: flex; flex-direction: column; padding-top: 7px; }
.command .dockhead { gap: 6px; }
.log { height: 36px; margin-top: 2px; display: flex; justify-content: space-between; background: #fcfcfc; border: 1px solid #888; border-right: 0; padding: 0 0 0 3px; overflow: hidden; }
.scroll { width: 16px; display: flex; flex-direction: column; justify-content: space-around; align-items: center; background: #ececec; }
.scroll svg { width: 8px; height: 8px; }
.cmdinput { height: 18px; background: #fff; border-left: 1px solid #888; padding-left: 3px; }
.right { width: 22px; flex: none; padding: 2px 0 0 2px; }
.vtab { writing-mode: vertical-rl; width: 20px; height: 129px; border: 1px solid #888; border-right: 0; background: #ececec; font-size: 12px; white-space: nowrap; }

.status { height: 20px; flex: none; display: flex; gap: 2px; padding-top: 1px; border-top: 1px solid #fff; }
.cell { height: 18px; flex: none; display: flex; align-items: center; border: 1px solid #999; padding-left: 4px; white-space: nowrap; overflow: hidden; }
.grow { flex: 1; }
.sq { width: 22px; padding-left: 2px; }
.sq svg { width: 16px; height: 14px; }
.c156 { width: 156px; } .c84 { width: 84px; } .c96 { width: 96px; padding-left: 2px; } .c26 { width: 26px; }
.c62 { width: 62px; padding-left: 6px; } .c33 { width: 33px; } .c207 { width: 207px; padding-left: 6px; } .c34 { width: 34px; } .c30 { width: 30px; }
.sizer { width: 12px; height: 12px; margin: 5px 2px 0 3px; }

.scope { position: absolute; right: 56px; bottom: 24px; width: 219px; border: 2px solid #777; background: #f0f0f0; }
.scopehead { height: 17px; display: flex; align-items: center; gap: 6px; padding: 0 4px 0 3px; background: #929292; color: #fff; }
.scopehead span { flex: 1; }
.scopehead svg { width: 9px; height: 9px; }
.scopetools { height: 23px; display: flex; align-items: center; padding-left: 1px; }
.scopetools button { width: 23px; padding-left: 3px; }
.scopetools svg { width: 16px; height: 16px; }
.scopetools i { width: 1px; height: 22px; margin: 0 2px; background: #aaa; }
```
